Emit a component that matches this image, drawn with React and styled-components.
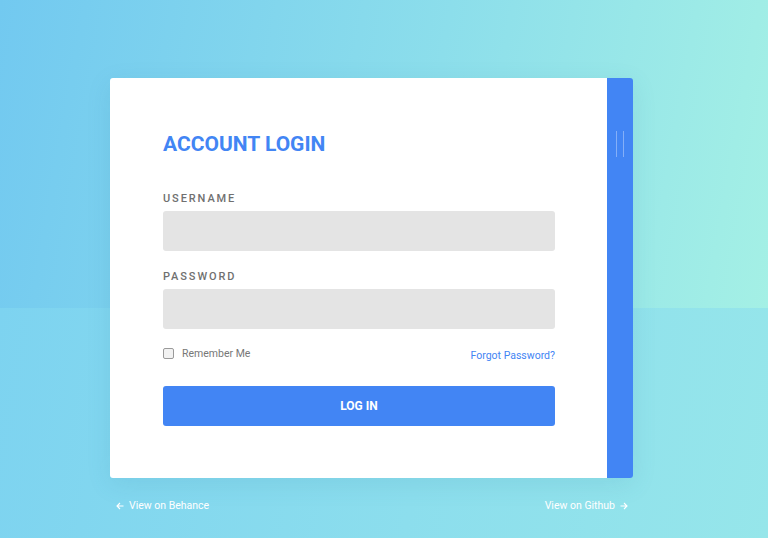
import React from 'react';
import styled, { createGlobalStyle } from 'styled-components';

const GlobalStyle = createGlobalStyle`
    html, body {
        margin: 0;
        padding: 0;
    }
    body {
        font-family: Roboto, 'Liberation Sans', Arial, sans-serif;
    }
`;

const Page = styled.div`
    box-sizing: border-box;
    min-height: 538px;
    padding: 78px 0 0 110px;
    background:
        linear-gradient(100deg, #72c9f0 0%, #8cdeeb 55%, #a4f0e5 100%) top / 100% 308px no-repeat,
        linear-gradient(100deg, #7dd3f0 0%, #8cdeed 55%, #96e6ea 100%) bottom / 100% 230px no-repeat;
`;

const Card = styled.div`
    display: flex;
    width: 523px;
    border-radius: 3px;
    overflow: hidden;
    box-shadow: 0 6px 24px rgba(40, 120, 160, 0.12);
`;

const Panel = styled.form`
    width: 497px;
    box-sizing: border-box;
    padding: 54px 52px 52px 53px;
    background: #ffffff;
`;

const Strip = styled.div`
    flex: 1;
    display: flex;
    justify-content: center;
    gap: 6px;
    padding-top: 53px;
    background: #4285f4;
`;

const Grip = styled.span`
    width: 1px;
    height: 26px;
    background: rgba(255, 255, 255, 0.35);
`;

const Title = styled.h1`
    margin: 0 0 36px;
    font-size: 21px;
    line-height: 24px;
    font-weight: 700;
    color: #4285f4;
`;

const Label = styled.label`
    display: block;
    margin-bottom: 6px;
    font-size: 11px;
    line-height: 13px;
    font-weight: 500;
    letter-spacing: 1.9px;
    color: #707070;
`;

const Field = styled.input`
    display: block;
    width: 100%;
    height: 40px;
    box-sizing: border-box;
    margin-bottom: ${p => p.$gap}px;
    border: none;
    border-radius: 3px;
    background: #e4e4e4;
    outline: none;
`;

const Row = styled.div`
    display: flex;
    align-items: center;
    justify-content: space-between;
    margin-bottom: 24px;
`;

const Check = styled.label`
    display: flex;
    align-items: center;
    gap: 8px;
    font-size: 10.5px;
    color: #777777;
`;

const Box = styled.input`
    appearance: none;
    width: 11px;
    height: 11px;
    margin: 0;
    border: 1px solid #9a9a9a;
    border-radius: 2px;
    background: #f2f2f2;
`;

const Forgot = styled.a`
    margin-top: 4px;
    font-size: 10.5px;
    color: #4285f4;
    text-decoration: none;
`;

const Button = styled.button`
    display: block;
    width: 100%;
    height: 40px;
    border: none;
    border-radius: 3px;
    background: #4285f4;
    color: #ffffff;
    font-family: inherit;
    font-size: 12px;
    font-weight: 700;
    cursor: pointer;
`;

const Footer = styled.div`
    display: flex;
    justify-content: space-between;
    width: 523px;
    box-sizing: border-box;
    padding: 21px 5px 0 6px;
`;

const FooterLink = styled.a`
    display: flex;
    align-items: center;
    gap: 5px;
    font-size: 10.5px;
    color: #ffffff;
    text-decoration: none;
`;

const Arrow = ({ dir }) => (
    <svg width="8" height="8" viewBox="0 0 8 8" fill="none" stroke="#fff" strokeWidth="1.1">
        {dir === 'left' ? (
            <path d="M7.5 4H1M4 1L1 4l3 3" />
        ) : (
            <path d="M0.5 4H7M4 1l3 3-3 3" />
        )}
    </svg>
);

const App = () => (
    <Page>
        <GlobalStyle />
        <Card>
            <Panel onSubmit={e => e.preventDefault()}>
                <Title>ACCOUNT LOGIN</Title>
                <Label htmlFor="username">USERNAME</Label>
                <Field id="username" type="text" $gap={19} />
                <Label htmlFor="password">PASSWORD</Label>
                <Field id="password" type="password" $gap={16} />
                <Row>
                    <Check>
                        <Box type="checkbox" />
                        Remember Me
                    </Check>
                    <Forgot href="#">Forgot Password?</Forgot>
                </Row>
                <Button type="submit">LOG IN</Button>
            </Panel>
            <Strip>
                <Grip />
                <Grip />
            </Strip>
        </Card>
        <Footer>
            <FooterLink href="#">
                <Arrow dir="left" />
                View on Behance
            </FooterLink>
            <FooterLink href="#">
                View on Github
                <Arrow dir="right" />
            </FooterLink>
        </Footer>
    </Page>
);

export default App;
